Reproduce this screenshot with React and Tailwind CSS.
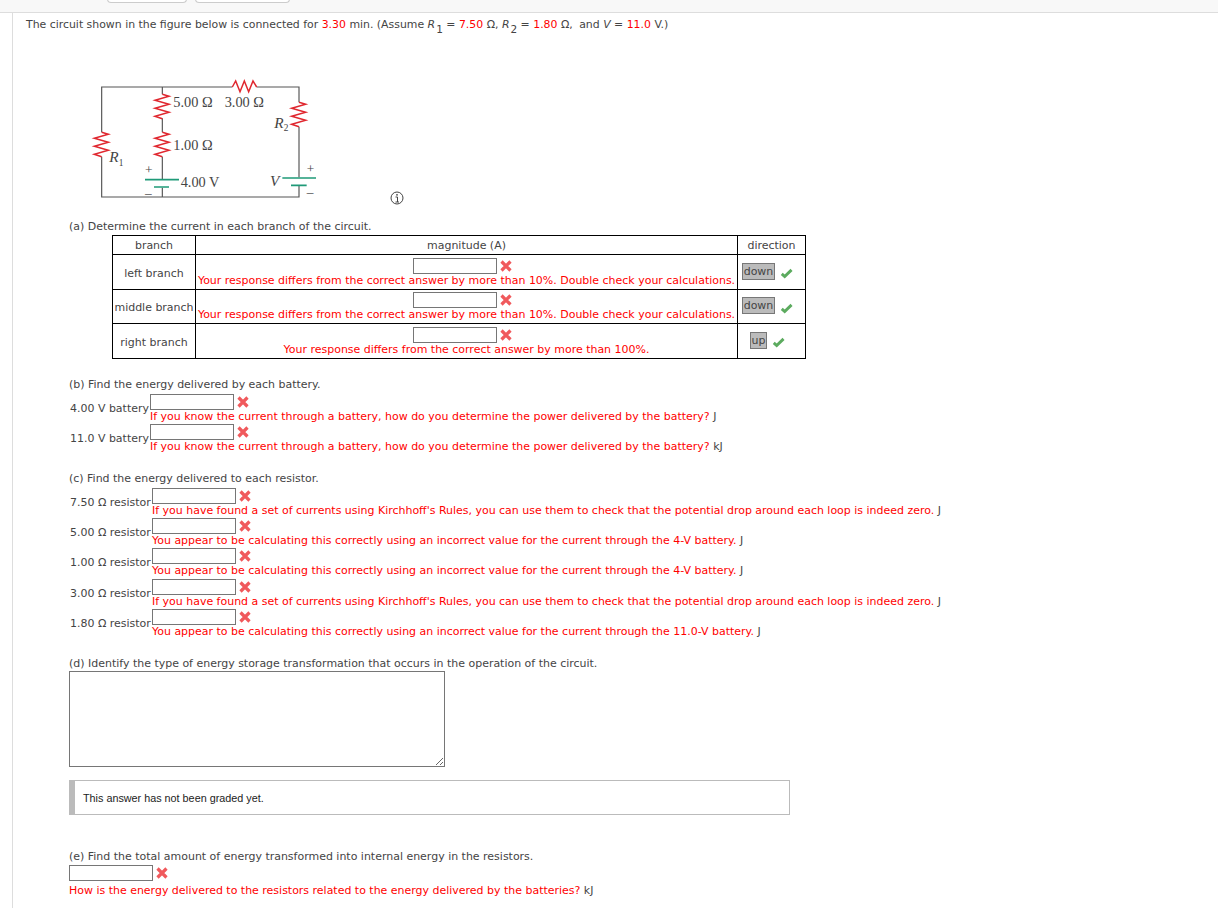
import React from 'react';

const XMark = () => (
  <svg viewBox="0 0 12 12" className="w-[12px] h-[12px] ml-[3px] shrink-0">
    <path d="M1.5 1.5 L10.5 10.5 M10.5 1.5 L1.5 10.5" stroke="#f0595c" strokeWidth="3.2" fill="none" />
  </svg>
);

const Check = () => (
  <svg viewBox="0 0 14 12" className="w-[13px] h-[11px] mt-[5px] shrink-0">
    <path d="M1.8 6.5 L5 9.2 L12.5 2" stroke="#5cab5f" strokeWidth="3.2" fill="none" />
  </svg>
);

const AnswerBox = () => (
  <input type="text" className="block w-[84px] h-[16px] bg-white border border-[#767676]" />
);

const Red = ({ children }) => <span className="text-[#ff0000]">{children}</span>;

const Sub = ({ children }) => <sub className="text-[10.5px] ml-[1px] -bottom-[5px]">{children}</sub>;

const resistorV = (x, y) =>
  `M${x},${y} L${x + 20},${y + 6} L${x - 22},${y + 18} L${x + 20},${y + 30} L${x - 22},${y + 42} L${x + 20},${y + 54} L${x - 22},${y + 66} L${x},${y + 73}`;

const CircuitFigure = () => (
  <svg viewBox="0 0 720 390" className="block w-[240px] h-[130px]">
    <path
      d="M35,172 V36 H427 M500,36 H627 V82 M627,155 V307 M627,330 V366 H35 V245 M217,36 V58 M217,130 V172 M217,245 V312 M217,338 V366"
      stroke="#555" strokeWidth="3.5" fill="none"
    />
    <g stroke="#e0272f" strokeWidth="4.5" fill="none">
      <path d="M427,36 L437,18 L450,50 L463,18 L476,50 L489,18 L500,36" />
      <path d={resistorV(35, 172)} />
      <path d={resistorV(217, 58)} />
      <path d={resistorV(217, 172)} />
      <path d={resistorV(627, 82)} />
    </g>
    <g stroke="#1f9a78" strokeWidth="5" fill="none">
      <path d="M165,314 H267 M192,336 H237 M577,309 H678 M603,331 H650" />
    </g>
    <g fontFamily="'Liberation Serif', serif" fontSize="43" fill="#444">
      <text x="250" y="97">5.00 Ω</text>
      <text x="404" y="97">3.00 Ω</text>
      <text x="250" y="224">1.00 Ω</text>
      <text x="272" y="336">4.00 V</text>
      <text x="58" y="260" fontStyle="italic" fontSize="46">R</text>
      <text x="86" y="272" fontSize="28">1</text>
      <text x="553" y="158" fontStyle="italic" fontSize="46">R</text>
      <text x="581" y="168" fontSize="28">2</text>
      <text x="540" y="333" fontStyle="italic" fontSize="46">V</text>
      <text x="650" y="293" fontSize="40">+</text>
      <text x="650" y="362" fontSize="40">–</text>
      <text x="165" y="298" fontSize="40">+</text>
      <text x="165" y="366" fontSize="40">–</text>
    </g>
  </svg>
);

const InfoIcon = () => (
  <svg viewBox="0 0 14 14" className="w-[14px] h-[14px] ml-[60px] shrink-0">
    <circle cx="7" cy="7" r="6" stroke="#444" strokeWidth="1" fill="none" />
    <path d="M5.5 6 H7.5 V11 M5.5 11 H9" stroke="#444" strokeWidth="1" fill="none" />
    <circle cx="7" cy="3.8" r="0.9" fill="#444" />
  </svg>
);

const branches = [
  { name: 'left branch', msg: 'Your response differs from the correct answer by more than 10%. Double check your calculations.', dir: 'down', h: 'h-[35px]' },
  { name: 'middle branch', msg: 'Your response differs from the correct answer by more than 10%. Double check your calculations.', dir: 'down', h: 'h-[34px]' },
  { name: 'right branch', msg: 'Your response differs from the correct answer by more than 100%.', dir: 'up', h: 'h-[35px]' },
];

const batteryHint = 'If you know the current through a battery, how do you determine the power delivered by the battery?';
const kirchhoff = "If you have found a set of currents using Kirchhoff's Rules, you can use them to check that the potential drop around each loop is indeed zero.";
const wrongCurrent = 'You appear to be calculating this correctly using an incorrect value for the current through the 4-V battery.';

const batteries = [
  { label: '4.00 V battery', hint: batteryHint, unit: 'J' },
  { label: '11.0 V battery', hint: batteryHint, unit: 'kJ' },
];

const resistors = [
  { label: '7.50 Ω resistor', hint: kirchhoff, h: 'h-[30px]' },
  { label: '5.00 Ω resistor', hint: wrongCurrent, h: 'h-[30px]' },
  { label: '1.00 Ω resistor', hint: wrongCurrent, h: 'h-[31px]' },
  { label: '3.00 Ω resistor', hint: kirchhoff, h: 'h-[30px]' },
  { label: '1.80 Ω resistor', hint: 'You appear to be calculating this correctly using an incorrect value for the current through the 11.0-V battery.', h: 'h-[30px]' },
];

// label on the left, box + x + hint stacked to the right of it
const AnswerRow = ({ label, hint, unit, labelW, h }) => (
  <div className={`flex ${h}`}>
    <div className={`${labelW} pt-[8px] pl-[1px] leading-[14px] shrink-0`}>{label}</div>
    <div>
      <div className="flex items-center h-[16px]">
        <AnswerBox />
        <XMark />
      </div>
      <div className="leading-[14px]">
        <Red>{hint}</Red> {unit}
      </div>
    </div>
  </div>
);

export default function App() {
  return (
    <div className="min-h-[908px] bg-white text-[#444] text-[10.97px] overflow-hidden" style={{ fontFamily: "'DejaVu Sans', sans-serif" }}>
      {/* top strip */}
      <div className="h-[13px] bg-[#f8f8f8] border-b border-[#ddd] flex items-end pl-[107px] gap-[8px]">
        <div className="w-[80px] h-[4px] bg-white border border-t-0 border-[#ccc] rounded-b-[4px] mb-[9px]" />
        <div className="w-[95px] h-[4px] bg-white border border-t-0 border-[#ccc] rounded-b-[4px] mb-[9px]" />
      </div>

      <div className="ml-[12px] border-l border-[#ddd] min-h-[895px]">
        <p className="pl-[13px] pt-[5px] leading-[14px] text-[10.9px]">
          The circuit shown in the figure below is connected for <Red>3.30</Red> min. (Assume <i>R</i>
          <Sub>1</Sub> = <Red>7.50</Red> Ω, <i>R</i>
          <Sub>2</Sub> = <Red>1.80</Red> Ω, <span className="ml-[3px]">and</span> <i>V</i> = <Red>11.0</Red> V.)
        </p>

        <div className="flex items-end ml-[77px] mt-[43px]">
          <CircuitFigure />
          <InfoIcon />
        </div>

        <div className="ml-[56px]">
          {/* part a */}
          <p className="mt-[15px] leading-[14px]">(a) Determine the current in each branch of the circuit.</p>
          <table className="ml-[43px] mt-[1px] border-collapse border border-black text-center">
            <tbody>
              <tr className="h-[19px]">
                <td className="w-[83px] pt-[2px] border border-black">branch</td>
                <td className="w-[542px] pt-[2px] border border-black">magnitude (A)</td>
                <td className="w-[68px] pt-[2px] border border-black">direction</td>
              </tr>
              {branches.map((b) => (
                <tr key={b.name} className={b.h}>
                  <td className="border border-black pt-[3px] whitespace-nowrap">{b.name}</td>
                  <td className="border border-black p-0 leading-[13px]">
                    <div className="flex justify-center items-center pr-[8px]">
                      <AnswerBox />
                      <XMark />
                    </div>
                    <Red>{b.msg}</Red>
                  </td>
                  <td className="border border-black">
                    <div className="flex justify-center items-center gap-[5px] pr-[8px] pb-[2px]">
                      <span className="bg-[#bbb] border border-[#777] px-[1px] leading-[15px]">{b.dir}</span>
                      <Check />
                    </div>
                  </td>
                </tr>
              ))}
            </tbody>
          </table>

          {/* part b */}
          <p className="mt-[19px] mb-[2px] leading-[14px]">(b) Find the energy delivered by each battery.</p>
          {batteries.map((b) => (
            <AnswerRow key={b.label} {...b} labelW="w-[81px]" h="h-[30px]" />
          ))}

          {/* part c */}
          <p className="mt-[18px] mb-[2px] leading-[14px]">(c) Find the energy delivered to each resistor.</p>
          {resistors.map((r) => (
            <AnswerRow key={r.label} {...r} unit="J" labelW="w-[83px]" />
          ))}

          {/* part d */}
          <p className="mt-[18px] leading-[14px]">(d) Identify the type of energy storage transformation that occurs in the operation of the circuit.</p>
          <textarea className="block w-[376px] h-[96px] bg-white border border-[#767676] resize" />

          <div className="mt-[13px] w-[721px] h-[35px] flex items-center border border-[#bbb] border-l-[6px] pl-[8px] text-[#222] text-[10.8px]" style={{ fontFamily: "'Liberation Sans', sans-serif" }}>
            This answer has not been graded yet.
          </div>

          {/* part e */}
          <p className="mt-[35px] leading-[14px]">(e) Find the total amount of energy transformed into internal energy in the resistors.</p>
          <div className="flex items-center h-[16px] mt-[1px]">
            <AnswerBox />
            <XMark />
          </div>
          <p className="leading-[20px]">
            <Red>How is the energy delivered to the resistors related to the energy delivered by the batteries?</Red> kJ
          </p>
        </div>
      </div>
    </div>
  );
}
